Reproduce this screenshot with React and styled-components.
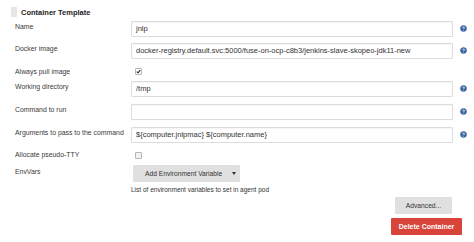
import React from 'react';
import styled, { createGlobalStyle } from 'styled-components';

const GlobalStyle = createGlobalStyle`
	html, body {
		margin: 0;
		padding: 0;
		background: #fff;
	}
	body {
		font-family: "Liberation Sans", Arial, sans-serif;
		color: #333;
	}
`;

const Page = styled.div`
	width: 474px;
	height: 242px;
	overflow: hidden;
	padding: 7px 0 0 11px;
	box-sizing: border-box;
`;

const Header = styled.div`
	display: flex;
	align-items: center;
	gap: 4px;
	height: 10px;
	margin-bottom: 4px;

	.handle {
		width: 6px;
		height: 10px;
		background: #e6e6e6;
	}

	.title {
		font-size: 7.5px;
		font-weight: bold;
		color: #222;
	}
`;

const Form = styled.div`
	display: flex;
	flex-direction: column;
	padding-left: 4px;
`;

const Row = styled.div`
	display: grid;
	grid-template-columns: 116px 322px 21px;
	align-items: start;
	height: ${(p) => p.h}px;
`;

const Label = styled.div`
	font-size: 6.9px;
	line-height: 9px;
	color: #3a3a3a;
	padding-top: ${(p) => p.pt ?? 1}px;
	white-space: nowrap;
`;

const Input = styled.div`
	height: 16px;
	border: 1px solid #dcdcdc;
	border-radius: 1px;
	box-sizing: border-box;
	font-size: 7.5px;
	line-height: 14px;
	padding-left: 4px;
	color: #333;
	white-space: nowrap;
	overflow: hidden;
	box-shadow: inset 0 1px 1px rgba(0, 0, 0, 0.04);
`;

const Help = styled.div`
	display: flex;
	justify-content: center;
	padding-top: 4px;
`;

const Check = styled.div`
	width: 7px;
	height: 7px;
	box-sizing: border-box;
	margin: ${(p) => p.mt}px 0 0 4px;
	border: 1px solid #b5b5b5;
	border-radius: 1px;
	background: ${(p) => (p.checked ? '#fff' : '#f2f2f2')};
	display: flex;
	align-items: center;
	justify-content: center;
`;

const Stack = styled.div`
	display: flex;
	flex-direction: column;
	align-items: flex-start;
	padding-left: 2px;
`;

const GreyButton = styled.div`
	display: flex;
	align-items: center;
	justify-content: ${(p) => (p.pl ? 'flex-start' : 'center')};
	gap: ${(p) => p.gap || 0}px;
	height: 17px;
	width: ${(p) => p.w}px;
	padding-left: ${(p) => p.pl || 0}px;
	background: #e0e0e0;
	border-radius: 1px;
	font-size: 6.7px;
	color: #333;
	white-space: nowrap;
	box-sizing: border-box;
`;

const Caret = styled.span`
	width: 0;
	height: 0;
	border-left: 2.5px solid transparent;
	border-right: 2.5px solid transparent;
	border-top: 3px solid #333;
`;

const Hint = styled.div`
	font-size: 6.5px;
	color: #333;
	margin-top: 4px;
	margin-left: -2px;
`;

const Actions = styled.div`
	display: flex;
	flex-direction: column;
	align-items: flex-end;
	gap: 4px;
	margin-top: -4px;
	padding-right: 12px;

	.advanced {
		margin-right: 10px;
	}
`;

const DeleteButton = styled.div`
	display: flex;
	align-items: center;
	justify-content: center;
	height: 17px;
	width: 71px;
	background: #d9443a;
	color: #fff;
	font-size: 7px;
	font-weight: bold;
	border-radius: 1px;
`;

function HelpIcon() {
	return (
		<svg width="7" height="7" viewBox="0 0 14 14">
			<circle cx="7" cy="7" r="6.5" fill="#4a74ad" />
			<circle cx="7" cy="7" r="5.5" fill="#3d66a3" />
			<path d="M5 5.3 C5 3.6 9 3.6 9 5.3 C9 6.6 7 6.6 7 8.3" stroke="#fff" strokeWidth="1.6" fill="none" />
			<circle cx="7" cy="10.3" r="0.9" fill="#fff" />
		</svg>
	);
}

function Field({ label, value, h = 23 }) {
	return (
		<Row h={h}>
			<Label>{label}</Label>
			<Input>{value}</Input>
			<Help><HelpIcon /></Help>
		</Row>
	);
}

function CheckRow({ label, checked, h, mt, pt }) {
	return (
		<Row h={h}>
			<Label pt={pt}>{label}</Label>
			<Check checked={checked} mt={mt}>
				{checked && (
					<svg width="5" height="5" viewBox="0 0 10 10">
						<path d="M1.5 5.2 L4 7.6 L8.6 2.2" stroke="#222" strokeWidth="2.2" fill="none" />
					</svg>
				)}
			</Check>
		</Row>
	);
}

export default function App() {
	return (
		<Page>
			<GlobalStyle />
			<Header>
				<div className='handle' />
				<div className='title'>Container Template</div>
			</Header>
			<Form>
				<Field label='Name' value='jnlp' h={22} />
				<Field label='Docker image' value='docker-registry.default.svc:5000/fuse-on-ocp-c8b3/jenkins-slave-skopeo-jdk11-new' />
				<CheckRow label='Always pull image' checked h={15} mt={2} pt={1} />
				<Field label='Working directory' value='/tmp' />
				<Field label='Command to run' value='' />
				<Field label='Arguments to pass to the command' value='${computer.jnlpmac} ${computer.name}' />
				<CheckRow label='Allocate pseudo-TTY' h={15} mt={2} pt={0} />
				<Row h={36}>
					<Label pt={2}>EnvVars</Label>
					<Stack>
						<GreyButton w={107} pl={12} gap={10}>
							<span>Add Environment Variable</span>
							<Caret />
						</GreyButton>
						<Hint>List of environment variables to set in agent pod</Hint>
					</Stack>
				</Row>
			</Form>
			<Actions>
				<GreyButton className='advanced' w={57}>Advanced...</GreyButton>
				<DeleteButton>Delete Container</DeleteButton>
			</Actions>
		</Page>
	);
}
